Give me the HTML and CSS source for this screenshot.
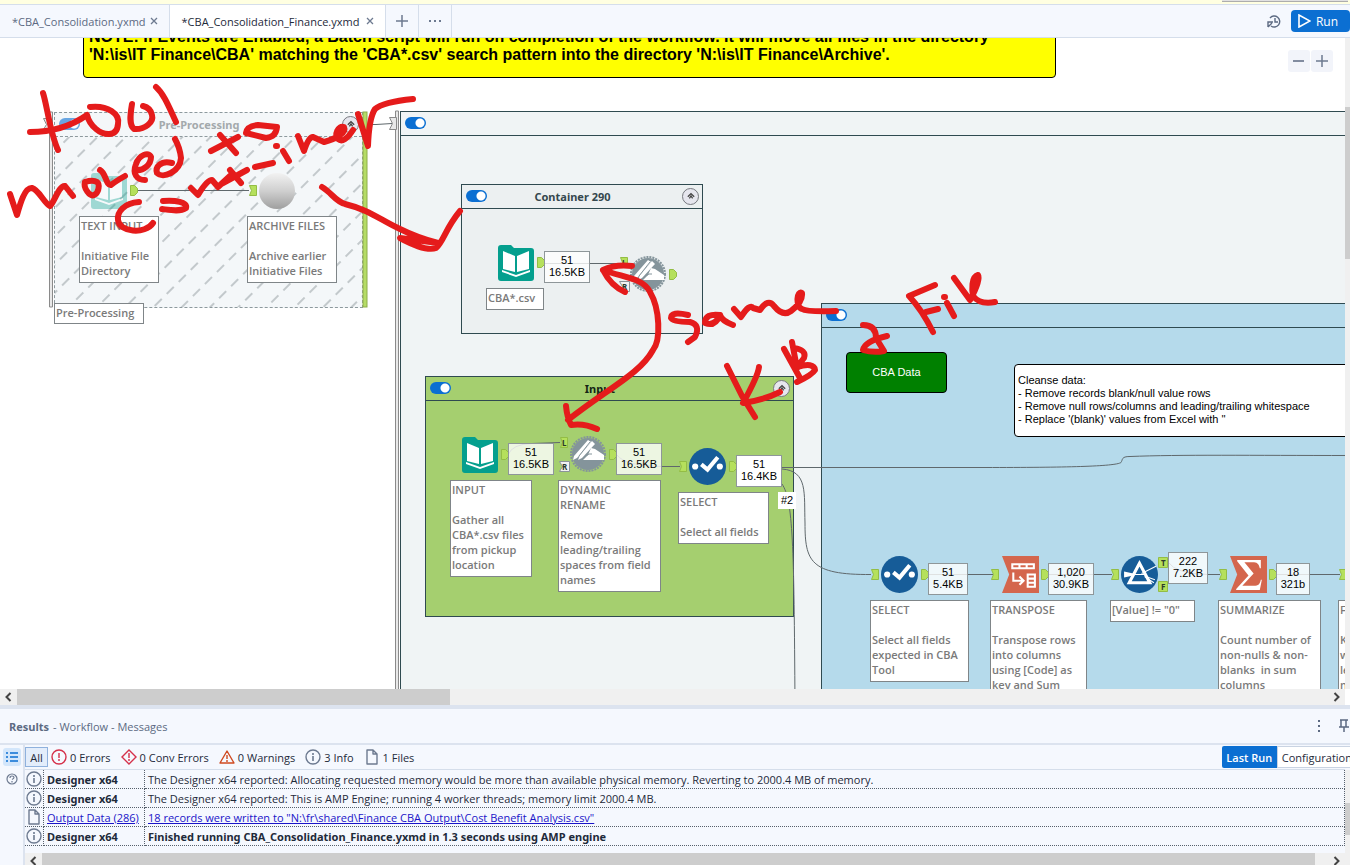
FILE: index.html
```html
<!DOCTYPE html>
<html lang="en">
<head>
  <meta charset="UTF-8">
  <meta name="viewport" content="width=device-width, initial-scale=1.0">
  <title>CBA_Consolidation_Finance.yxmd</title>
  <link rel="stylesheet" href="styles.css">
</head>
<body>
  <!-- Shared icons -->
  <svg class="defs" aria-hidden="true">
    <symbol id="i-book" viewBox="0 0 36 36">
      <path fill="#049f8e" d="M3 0h10l3 3h17a3 3 0 0 1 3 3v27a3 3 0 0 1-3 3H3a3 3 0 0 1-3-3V3a3 3 0 0 1 3-3z"/>
      <path fill="#fff" d="M5 6l12 5v16L5 24zM31 6l-12 5v16l12-3zM4 25l14 5 14-5v2l-14 5-14-5z"/>
    </symbol>
    <symbol id="i-rename" viewBox="0 0 36 36">
      <circle cx="18" cy="18" r="16" fill="#84949b"/>
      <circle cx="18" cy="18" r="17" fill="none" stroke="#84949b" stroke-width="2" stroke-dasharray="2 1"/>
      <path fill="#fff" d="M3 24l1-4L18 4l3 2L7 22z"/>
      <path fill="#fff" d="M8 24l2-5L22 5l3 3-13 14z"/>
      <path fill="#fff" d="M13 24l5-5 3-7 4 1 9 6v5z"/>
      <path d="M14 21l5-3h3M9 20L20 6" fill="none" stroke="#84949b" stroke-width="1"/>
    </symbol>
    <symbol id="i-select" viewBox="0 0 36 36">
      <circle cx="18" cy="18" r="18" fill="#165c98"/>
      <circle cx="6" cy="18" r="3" fill="#fff"/>
      <circle cx="30" cy="18" r="3" fill="#fff"/>
      <path d="M12 16l6 5L28 9" fill="none" stroke="#fff" stroke-width="4"/>
    </symbol>
    <symbol id="i-transpose" viewBox="0 0 36 36">
      <path fill="#d4664d" d="M0 0h36v36H0l7-18z"/>
      <path fill="#fff" d="M9 7h23v6H9zM24 17h9v14h-9z"/>
      <path d="M11 10h5m2 0h5m2 0h5M26 20h5m-5 4h5m-5 4h5" stroke="#d4664d" stroke-width="2"/>
      <path d="M11 16v8h9M17 20l4 4-4 4" fill="none" stroke="#fff" stroke-width="2"/>
    </symbol>
    <symbol id="i-filter" viewBox="0 0 36 36">
      <circle cx="18" cy="18" r="18" fill="#165c98"/>
      <path fill="#fff" d="M3 15l9 2v2l-9 2z"/>
      <path d="M20 17l14-7M24 20l9 3M23 20l9 6" stroke="#fff" stroke-width="1"/>
      <path d="M18 7L8 26h20z" fill="none" stroke="#fff" stroke-width="3"/>
      <path d="M12 18h12" stroke="#fff" stroke-width="1"/>
    </symbol>
    <symbol id="i-sum" viewBox="0 0 36 36">
      <path fill="#d4664d" d="M0 0h36v36H0l7-18z"/>
      <path fill="#fff" d="M7 4h23v8h-1c-1-5-3-6-7-6h-8l9 11-11 12h11c5 0 6-2 7-6h1l-2 10H6v-1l12-13L7 5z"/>
    </symbol>
    <symbol id="i-info" viewBox="0 0 16 16">
      <circle cx="8" cy="8" r="7" fill="none" stroke="#6d7a90" stroke-width="1.4"/>
      <path d="M8 4v2M8 7v5" stroke="#6d7a90" stroke-width="1.6"/>
    </symbol>
    <symbol id="i-file" viewBox="0 0 16 16">
      <path d="M3 1h6l4 4v10H3zM9 1v4h4" fill="none" stroke="#6d7a90" stroke-width="1.4" stroke-linejoin="round"/>
    </symbol>
    <symbol id="a-out" viewBox="0 0 8 11"><path fill="#b5e05c" stroke="#93bd45" d="M.5.5h4l3 3v4l-3 3h-4z"/></symbol>
    <symbol id="a-in" viewBox="0 0 8 11"><path fill="#b5e05c" stroke="#93bd45" d="M.5.5h7v10h-7l2-5z"/></symbol>
    <symbol id="i-up" viewBox="0 0 10 10"><path d="M1 6l4-4 4 4M3 8l2-3 2 3" fill="none" stroke="#444" stroke-width="1.6"/></symbol>
    <symbol id="i-left" viewBox="0 0 8 10"><path d="M6 1L2 5l4 4" fill="none" stroke="#444" stroke-width="2"/></symbol>
    <symbol id="i-right" viewBox="0 0 8 10"><path d="M2 1l4 4-4 4" fill="none" stroke="#444" stroke-width="2"/></symbol>
    <symbol id="i-x" viewBox="0 0 8 8"><path d="M1 1l6 6M7 1L1 7" stroke="#6d7a90" stroke-width="1.3"/></symbol>
    <symbol id="i-plus" viewBox="0 0 12 12"><path d="M6 0v12M0 6h12" stroke="#6d7a90" stroke-width="1.5"/></symbol>
  </svg>

  <div class="top-strip"><div class="top-field"></div></div>

  <header class="tabs">
    <div class="tab"><a href="#">*CBA_Consolidation.yxmd</a><button aria-label="Close"><svg class="x"><use href="#i-x"/></svg></button></div>
    <div class="tab active"><a href="#">*CBA_Consolidation_Finance.yxmd</a><button aria-label="Close"><svg class="x"><use href="#i-x"/></svg></button></div>
    <button class="tab-btn" aria-label="New tab"><svg class="plus"><use href="#i-plus"/></svg></button>
    <button class="tab-btn" aria-label="More"><svg width="12" height="2"><path d="M0 1h2m3 0h2m3 0h2" stroke="#6d7a90" stroke-width="2"/></svg></button>
    <div class="spacer"></div>
    <button class="history" aria-label="History">
      <svg width="14" height="14" viewBox="0 0 14 14"><path d="M3 4a5.500 5.500 0 1 1 1 8M1 13V8h5M1 13l4-4M8 4v4h3" fill="none" stroke="#5c6a82" stroke-width="1.4"/></svg>
    </button>
    <button class="run"><svg width="14" height="14" viewBox="0 0 14 14"><path d="M2 1v12l11-6z" fill="none" stroke="#fff" stroke-width="1.6"/></svg>Run</button>
  </header>

  <main class="canvas">
    <div class="stage">
      <div class="note yellow">NOTE: If Events are Enabled, a Batch script will run on completion of the workflow. It will move all files in the directory<br>'N:\is\IT Finance\CBA' matching the 'CBA*.csv' search pattern into the directory 'N:\is\IT Finance\Archive'.</div>

      <!-- Containers -->
      <section class="box pre">
        <svg class="hatch">
          <defs>
            <pattern id="dashes" width="17" height="20" patternUnits="userSpaceOnUse" patternTransform="rotate(-45)">
              <path d="M2 10h10" stroke="#c3c9cc" stroke-width="2"/>
            </pattern>
          </defs>
          <rect width="100%" height="100%" fill="url(#dashes)"/>
        </svg>
        <div class="box-head"><input type="checkbox" class="toggle" aria-label="Enable Pre-Processing" checked><h2>Pre-Processing</h2><button class="fold" aria-label="Collapse"><svg><use href="#i-up"/></svg></button></div>
      </section>
      <section class="box main-box">
        <div class="box-head"><input type="checkbox" class="toggle" aria-label="Enable container" checked></div>
      </section>
      <section class="box c290">
        <div class="box-head"><input type="checkbox" class="toggle" aria-label="Enable Container 290" checked><h2>Container 290</h2><button class="fold" aria-label="Collapse"><svg><use href="#i-up"/></svg></button></div>
      </section>
      <section class="box input-box">
        <div class="box-head"><input type="checkbox" class="toggle" aria-label="Enable Input" checked><h2>Input</h2><button class="fold" aria-label="Collapse"><svg><use href="#i-up"/></svg></button></div>
      </section>
      <section class="box blue-box">
        <div class="box-head"><input type="checkbox" class="toggle" aria-label="Enable CBA container" checked></div>
      </section>

      <div class="note green">CBA Data</div>
      <div class="note cleanse">Cleanse data:<br>- Remove records blank/null value rows<br>- Remove null rows/columns and leading/trailing whitespace<br>- Replace '(blank)' values from Excel with ''</div>

      <!-- Connections, anchors and tool icons -->
      <svg class="wires">
        <g fill="#e8e8e8" stroke="#8a8a8a">
          <path d="M49.500 112v195h3v-195zM395.500 111v600h3v-600z"/>
          <path d="M43.500 118.500h7v11h-7l3-5zM389.500 117.500h7v12h-7l3-6z"/>
        </g>
        <rect x="363" y="112" width="4" height="195" fill="#b5dc66" stroke="#8dae4a"/>
        <g fill="none" stroke="#5f686c" stroke-width="1">
          <path d="M368 124.500h8l16-1M137 190.500h112M544 263.500h78M508 455q4-11 24-11.500l28-1M617 455q8 11 45 11.500h18"/>
          <path d="M737 467.500h248c80 0 130-1 136-5c2-3 0-6 9-6c50-2 120-1 220-1"/>
          <path d="M782 469c26 2 22 24 23 54c0 38 5 52 66 51.500M782 484c11 16 12 60 13 220"/>
          <path d="M929 574.500h64M1048 574.500h64M1168 562q8 12 40 12.500h12M1276 574.500h64"/>
        </g>
        <g>
          <use href="#a-out" x="130" y="185" width="8" height="11"/>
          <use href="#a-in" x="248" y="185" width="10" height="11"/>
          <use href="#a-out" x="537" y="257" width="8" height="11"/>
          <use href="#a-in" x="620" y="257" width="8" height="11"/>
          <use href="#a-out" x="669" y="269" width="8" height="11"/>
          <use href="#a-out" x="501" y="449" width="8" height="11"/>
          <use href="#a-in" x="560" y="437" width="8" height="11"/>
          <use href="#a-out" x="609" y="449" width="8" height="11"/>
          <use href="#a-in" x="679" y="461" width="8" height="11"/>
          <use href="#a-out" x="729" y="461" width="8" height="11"/>
          <use href="#a-in" x="871" y="569" width="8" height="11"/>
          <use href="#a-out" x="921" y="569" width="8" height="11"/>
          <use href="#a-in" x="991" y="569" width="8" height="11"/>
          <use href="#a-out" x="1041" y="569" width="8" height="11"/>
          <use href="#a-in" x="1111" y="569" width="8" height="11"/>
          <use href="#a-in" x="1219" y="569" width="8" height="11"/>
          <use href="#a-out" x="1269" y="569" width="8" height="11"/>
          <use href="#a-in" x="1339" y="569" width="8" height="11"/>
        </g>
        <path d="M1158.500 557.500h9v10h-9zM1158.500 581.500h9v10h-9z" fill="#b5e05c" stroke="#93bd45"/>
        <path d="M619.500 281.500h10v10h-10l3-5zM559.500 461.500h10v10h-10l3-5z" fill="#f2f2f2" stroke="#8a9499"/>
        <g class="anchor-text">
          <text x="622" y="266">L</text><text x="622" y="290">R</text>
          <text x="562" y="446">L</text><text x="562" y="470">R</text>
          <text x="1161" y="566">T</text><text x="1161" y="590">F</text>
        </g>
        <use href="#i-book" x="91" y="173" width="36" height="36" opacity=".35"/>
        <defs>
          <linearGradient id="ball" x2="0" y2="1"><stop offset="0" stop-color="#f2f2f2"/><stop offset=".5" stop-color="#cfcfcf"/><stop offset="1" stop-color="#9f9f9f"/></linearGradient>
        </defs>
        <circle cx="277" cy="191" r="18" fill="url(#ball)"/>
        <use href="#i-book" x="498" y="245" width="36" height="36"/>
        <use href="#i-rename" x="630" y="256" width="36" height="36"/>
        <use href="#i-book" x="462" y="437" width="36" height="36"/>
        <use href="#i-rename" x="570" y="436" width="36" height="36"/>
        <use href="#i-select" x="689" y="448" width="37" height="37"/>
        <use href="#i-select" x="881" y="556" width="37" height="37"/>
        <use href="#i-transpose" x="1002" y="556" width="37" height="37"/>
        <use href="#i-filter" x="1121" y="556" width="37" height="37"/>
        <use href="#i-sum" x="1230" y="556" width="37" height="37"/>
      </svg>

      <!-- Record counts -->
      <div class="count n1">51<br>16.5KB</div>
      <div class="count n2">51<br>16.5KB</div>
      <div class="count n3">51<br>16.5KB</div>
      <div class="count n4">51<br>16.4KB</div>
      <div class="count n5">51<br>5.4KB</div>
      <div class="count n6">1,020<br>30.9KB</div>
      <div class="count n7">222<br>7.2KB</div>
      <div class="count n8">18<br>321b</div>
      <div class="wire-tag">#2</div>

      <!-- Annotations -->
      <p class="label l1">TEXT INPUT<br><br>Initiative File<br>Directory</p>
      <p class="label l2">ARCHIVE FILES<br><br>Archive earlier<br>Initiative Files</p>
      <p class="label l3">Pre-Processing</p>
      <p class="label l4">CBA*.csv</p>
      <p class="label l5">INPUT<br><br>Gather all<br>CBA*.csv files<br>from pickup<br>location</p>
      <p class="label l6">DYNAMIC<br>RENAME<br><br>Remove<br>leading/trailing<br>spaces from field<br>names</p>
      <p class="label l7">SELECT<br><br>Select all fields</p>
      <p class="label l8">SELECT<br><br>Select all fields<br>expected in CBA<br>Tool</p>
      <p class="label l9">TRANSPOSE<br><br>Transpose rows<br>into columns<br>using [Code] as<br>key and Sum</p>
      <p class="label l10">[Value] != "0"</p>
      <p class="label l11">SUMMARIZE<br><br>Count number of<br>non-nulls &amp; non-<br>blanks&nbsp; in sum<br>columns</p>
      <p class="label l12">F<br><br>K<br>w<br>le<br>n</p>

      <!-- Pen markup -->
      <svg class="ink">
        <path d="M43 93C47 105 50 133 58 150M30 132C52 132 70 127 87 115M90 107C108 105 120 114 118 124C117 138 103 135 96 129C91 125 88 119 87 115"/>
        <path d="M132 104C130 116 129 125 134 129C145 130 154 122 152 115C151 110 147 107 143 106M156 87C164 94 169 107 176 122"/>
        <path d="M10 194L17 215C20 204 25 187 32 188C39 190 44 203 50 206C54 203 59 185 65 186L73 196"/>
        <path d="M85 182C83 188 90 197 94 195C99 193 100 184 97 182C94 180 88 181 85 182M100 170C106 173 106 186 111 185Q116 181 125 176"/>
        <path d="M136 170C143 171 151 165 151 157C149 151 139 155 136 164C132 174 137 180 145 180M172 163C161 160 155 167 157 173C163 179 180 172 181 158Q180 148 175 139"/>
        <path d="M220 135L236 153M211 151L238 137M246 133Q247 126 258 125L277 127Q276 137 266 138L246 133"/>
        <path d="M139 202C124 203 117 212 118 220C119 232 145 235 153 223M163 201C175 200 188 202 186 208C180 212 170 210 162 209"/>
        <path d="M191 188L198 195Q207 180 212 180L218 187L231 175M230 170L241 183M223 183L247 170M255 167L273 163M276 146h1M283 151L289 161"/>
        <path d="M298 136L304 151Q309 136 313 137L324 142C335 139 347 133 344 127C338 125 334 135 338 139Q344 144 353 130M358 114L368 146Q369 118 375 109Q383 102 413 99"/>
        <path d="M322 187C332 193 335 201 345 204C370 210 380 220 400 229Q418 238 438 243L400 238Q426 252 436 248C444 241 445 229 460 211"/>
        <path d="M632 266Q615 264 603 270Q611 286 625 292M603 270C625 278 643 278 650 292C660 309 661 340 653 350C640 374 607 389 568 420M566 406Q567 417 571 425Q584 423 597 429"/>
        <path d="M688 315Q671 311 671 318Q673 322 690 322Q701 325 695 337L688 342M720 315Q705 313 705 323Q715 327 720 315Q722 321 733 325"/>
        <path d="M734 309L741 317Q750 303 753 308L760 310Q768 298 774 306Q783 317 791 311Q803 302 802 293C797 290 795 306 802 309Q807 312 836 311"/>
        <path d="M935 285L909 296Q922 310 933 332M926 312L938 309M944 297h1M947 303L954 316M954 278L970 300Q981 280 978 275C971 277 972 290 973 296Q980 305 995 302"/>
        <path d="M863 325Q876 325 876 338L884 351Q873 353 863 350Q865 341 887 336M727 366L742 396L755 417M759 367Q758 376 743 403Q764 400 780 392"/>
        <path d="M784 349L800 378M792 342L797 368M794 348Q807 350 804 358L797 367Q814 362 815 370Q812 375 797 382"/>
      </svg>
    </div>
    <div class="zoomer"><button aria-label="Zoom out"><svg class="plus"><path d="M0 6h11" stroke="#5c6a82" stroke-width="1.5"/></svg></button><button aria-label="Zoom in"><svg class="plus"><use href="#i-plus"/></svg></button></div>
    <div class="vscroll"><div class="vthumb"></div></div>
  </main>
  <div class="hscroll canvas-scroll"><svg><use href="#i-left"/></svg><div class="track"><div class="thumb"></div></div><svg><use href="#i-right"/></svg></div>

  <section class="results">
    <div class="results-head"><b>Results</b> <span>- Workflow - Messages</span><div class="spacer"></div>
      <svg width="4" height="12"><path d="M2 0v2m0 3v2m0 3v2" stroke="#5c6a82" stroke-width="2"/></svg>
      <svg class="pin" width="12" height="14" viewBox="0 0 12 14"><path d="M2 1h8M3 1v7M8 1v7M1 8h10M6 8v5" fill="none" stroke="#5c6a82" stroke-width="1.5"/></svg>
    </div>
    <div class="results-body">
      <nav class="side">
        <button class="on" aria-label="Messages"><svg width="12" height="10"><path d="M0 1h2M4 1h8M0 5h2M4 5h8M0 9h2M4 9h8" stroke="#0b6fd2" stroke-width="1.4"/></svg></button>
        <button aria-label="Help"><svg width="12" height="12" viewBox="0 0 12 12"><circle cx="6" cy="6" r="5" fill="none" stroke="#6d7a90" stroke-width="1.2"/><path d="M4 5q0-2 2-2t2 1.500q0 1-2 2M6 8v1.500" fill="none" stroke="#6d7a90" stroke-width="1.2"/></svg></button>
      </nav>
      <div class="pane">
        <div class="filters">
          <button class="all">All</button>
          <button><svg class="ic" viewBox="0 0 16 16"><g fill="none" stroke="#d5304a" stroke-width="1.4"><circle cx="8" cy="8" r="7"/><path d="M8 4v5M8 10v2"/></g></svg>0 Errors</button>
          <button><svg class="ic" viewBox="0 0 16 16"><g fill="none" stroke="#d5304a" stroke-width="1.4"><path d="M8 1l7 7-7 7-7-7zM8 4v5M8 10v2"/></g></svg>0 Conv Errors</button>
          <button><svg class="ic" viewBox="0 0 16 16"><g fill="none" stroke="#cf4a20" stroke-width="1.4" stroke-linejoin="round"><path d="M8 2l7 12H1zM8 6v4M8 11v2"/></g></svg>0 Warnings</button>
          <button><svg class="ic"><use href="#i-info"/></svg>3 Info</button>
          <button><svg class="ic"><use href="#i-file"/></svg>1 Files</button>
          <div class="spacer"></div>
          <button class="last-run">Last Run</button><button class="config">Configuration</button>
        </div>
        <table>
          <tr><td><svg class="ic"><use href="#i-info"/></svg></td><th scope="row">Designer x64</th><td>The Designer x64 reported: Allocating requested memory would be more than available physical memory. Reverting to 2000.4 MB of memory.</td></tr>
          <tr><td><svg class="ic"><use href="#i-info"/></svg></td><th scope="row">Designer x64</th><td>The Designer x64 reported: This is AMP Engine; running 4 worker threads; memory limit 2000.4 MB.</td></tr>
          <tr><td><svg class="ic"><use href="#i-file"/></svg></td><td><a href="#">Output Data (286)</a></td><td><a href="#">18 records were written to "N:\fr\shared\Finance CBA Output\Cost Benefit Analysis.csv"</a></td></tr>
          <tr><td><svg class="ic"><use href="#i-info"/></svg></td><th scope="row">Designer x64</th><td><b>Finished running CBA_Consolidation_Finance.yxmd in 1.3 seconds using AMP engine</b></td></tr>
        </table>
        <div class="hscroll"><svg><use href="#i-left"/></svg><div class="track"><div class="thumb wide"></div></div><svg><use href="#i-right"/></svg></div>
      </div>
      <div class="pane-scroll"><div class="pane-thumb"></div></div>
    </div>
  </section>
</body>
</html>
```
FILE: styles.css
```css
* {
  box-sizing: border-box;
}

body {
  margin: 0;
  height: 100vh;
  display: flex;
  flex-direction: column;
  overflow: hidden;
  background: #fff;
  color: #1e2a3a;
  font-family: "Open Sans", "Noto Sans", sans-serif;
  font-size: 11px;
}

button {
  border: 0;
  padding: 0;
  background: none;
  color: inherit;
  font: inherit;
  display: flex;
  align-items: center;
  justify-content: center;
  cursor: pointer;
}

.defs {
  position: absolute;
  width: 0;
  height: 0;
}

.spacer {
  flex: 1;
}

/* top bar */
.top-strip {
  height: 4px;
  flex: none;
  display: flex;
  justify-content: flex-end;
  background: #ffffe1;
}

.top-field {
  width: 126px;
  height: 2px;
  margin-right: 2px;
  background: #e1e1e1;
  border-bottom: 1px solid #adadad;
}

.tabs {
  height: 34px;
  flex: none;
  display: flex;
  align-items: stretch;
  background: #f5f8fe;
  border-top: 1px solid #d5deeb;
  border-bottom: 1px solid #d5deeb;
}

.tab {
  display: flex;
  align-items: center;
  gap: 4px;
  padding: 0 11px 0 12px;
  border-right: 1px solid #d5deeb;
}

.tab a {
  color: #5c6a82;
  text-decoration: none;
}

.tab.active {
  background: #fff;
  gap: 7px;
}

.tab.active a {
  color: #1e2a3a;
}

.x {
  width: 8px;
  height: 8px;
}

.tab-btn {
  width: 33px;
  border-right: 1px solid #d5deeb;
}

.plus {
  width: 12px;
  height: 12px;
}

.history {
  margin-right: 10px;
}

.run {
  align-self: center;
  width: 59px;
  height: 22px;
  gap: 5px;
  padding-right: 6px;
  border-radius: 4px;
  background: #0b6fd2;
  color: #fff;
  font-size: 12px;
}

/* canvas */
.canvas {
  flex: 1;
  min-height: 0;
  position: relative;
  overflow: hidden;
}

.stage {
  position: absolute;
  top: -38px;
  left: 0;
  right: 5px;
  height: 740px;
  overflow: hidden;
}

.note {
  position: absolute;
  border: 1px solid #000;
  border-radius: 4px;
  font-family: "Liberation Sans", Arial, sans-serif;
  white-space: nowrap;
  color: #000;
}

.yellow {
  left: 83px;
  top: 10px;
  width: 973px;
  height: 68px;
  padding: 17px 5px;
  background: #ff0;
  font-size: 16px;
  line-height: 18px;
  font-weight: bold;
}

.green {
  left: 846px;
  top: 352px;
  width: 101px;
  height: 41px;
  background: #008000;
  color: #fff;
  font-size: 11px;
  line-height: 39px;
  text-align: center;
}

.cleanse {
  left: 1014px;
  top: 364px;
  width: 400px;
  height: 73px;
  padding: 9px 3px;
  background: #fff;
  font-size: 11px;
  line-height: 13px;
}

.box {
  position: absolute;
  border: 1px solid #2f4a50;
}

.box-head {
  height: 24px;
  display: grid;
  grid-template-columns: 26px 1fr 26px;
  align-items: center;
  padding: 0 3px 1px 4px;
  border-bottom: 1px solid #2f4a50;
}

.box h2 {
  margin: 0 20px 0 0;
  font-family: "Noto Sans", sans-serif;
  font-size: 11px;
  line-height: 15px;
  text-align: center;
  color: #34474d;
}

.toggle {
  appearance: none;
  width: 21px;
  height: 12px;
  margin: 0;
  border-radius: 6px;
  background: radial-gradient(circle at 15px 6px, #fff 4px, #0b6fd2 5px);
}

.fold {
  justify-self: end;
  width: 17px;
  height: 17px;
  border: 1px solid #77797f;
  border-radius: 50%;
  background: #e6e6ee;
}

.fold svg {
  width: 8px;
  height: 8px;
}

.pre {
  left: 54px;
  top: 112px;
  width: 309px;
  height: 196px;
  background: #f4f7f9;
  border: 1px dashed #8d999d;
}

.pre .box-head {
  border-bottom: 1px dashed #8d999d;
}

.pre h2 {
  color: #a3a9ac;
}

.pre .toggle {
  opacity: .6;
}

.hatch {
  position: absolute;
  top: 24px;
  left: 0;
  width: 100%;
  height: 170px;
}

.main-box {
  left: 400px;
  top: 111px;
  right: -10px;
  bottom: -10px;
  background: #f0f4f5;
}

.c290 {
  left: 461px;
  top: 184px;
  width: 242px;
  height: 150px;
  background: #ecf0f1;
}

.input-box {
  left: 425px;
  top: 376px;
  width: 369px;
  height: 241px;
  background: #a5cf6f;
}

.input-box h2 {
  color: #142414;
}

.blue-box {
  left: 821px;
  top: 303px;
  right: -10px;
  bottom: -10px;
  background: #b5daeb;
}

.wires,
.ink {
  position: absolute;
  top: 0;
  left: 0;
  width: 100%;
  height: 100%;
  pointer-events: none;
}

.ink {
  fill: none;
  stroke: #e51b1b;
  stroke-width: 6;
  stroke-linecap: round;
  stroke-linejoin: round;
}

.anchor-text {
  font-size: 8px;
  font-weight: bold;
  fill: #2c3a2c;
}

.count {
  position: absolute;
  width: 46px;
  height: 32px;
  padding-top: 2px;
  border: 1px solid #8e9699;
  background: rgba(255, 255, 255, .8);
  color: #000;
  font-family: "Liberation Sans", Arial, sans-serif;
  font-size: 11px;
  line-height: 12px;
  text-align: center;
}

.n1 { left: 544px; top: 251px; }
.n2 { left: 508px; top: 443px; }
.n3 { left: 616px; top: 443px; }
.n4 { left: 736px; top: 455px; background: #fff; }
.n5 { left: 928px; top: 563px; width: 40px; }
.n6 { left: 1048px; top: 563px; }
.n7 { left: 1168px; top: 552px; width: 40px; }
.n8 { left: 1276px; top: 563px; width: 34px; }

.wire-tag {
  position: absolute;
  left: 778px;
  top: 492px;
  width: 18px;
  background: #fff;
  color: #000;
  font-family: "Liberation Sans", Arial, sans-serif;
  font-size: 11px;
  line-height: 17px;
  text-align: center;
}

.label {
  position: absolute;
  margin: 0;
  padding: 1px;
  border: 1px solid #7f8588;
  background: #fff;
  color: #7a7a7a;
  font-size: 11px;
  font-weight: 600;
  line-height: 15px;
  white-space: nowrap;
}

.l1 { left: 79px; top: 216px; width: 80px; height: 67px; }
.l2 { left: 247px; top: 216px; width: 90px; height: 67px; }
.l3 { left: 54px; top: 303px; width: 90px; height: 21px; }
.l4 { left: 486px; top: 288px; width: 58px; height: 22px; }
.l5 { left: 450px; top: 480px; width: 82px; height: 97px; }
.l6 { left: 558px; top: 480px; width: 103px; height: 112px; }
.l7 { left: 678px; top: 492px; width: 91px; height: 52px; }
.l8 { left: 870px; top: 600px; width: 99px; height: 82px; }
.l9 { left: 990px; top: 600px; width: 97px; height: 110px; }
.l10 { left: 1110px; top: 600px; width: 85px; height: 22px; }
.l11 { left: 1218px; top: 600px; width: 103px; height: 110px; }
.l12 { left: 1338px; top: 600px; width: 90px; height: 110px; }

.zoomer {
  position: absolute;
  top: 12px;
  right: 17px;
  display: flex;
  gap: 1px;
}

.zoomer button {
  width: 22px;
  height: 22px;
  border-radius: 3px;
  background: #f2f4fa;
}

.vscroll {
  position: absolute;
  top: 0;
  right: 0;
  bottom: 0;
  width: 5px;
  background: #f0f0f0;
}

.vthumb {
  height: 152px;
  margin-top: 69px;
  background: #cdcdcd;
}

.hscroll {
  height: 16px;
  flex: none;
  display: flex;
  align-items: center;
  background: #f0f0f0;
}

.hscroll svg {
  width: 17px;
  height: 10px;
}

.canvas-scroll {
  margin: 0 5px 0 0;
}

.track {
  flex: 1;
  height: 100%;
}

.thumb {
  width: 33%;
  height: 100%;
  background: #cdcdcd;
}

.thumb.wide {
  width: 99%;
}

/* results */
.results {
  flex: none;
  height: 160px;
  overflow: hidden;
  background: #f5f8fe;
  border-top: 4px solid #dce3ef;
}

.results-head {
  height: 36px;
  display: flex;
  align-items: center;
  gap: 4px;
  padding-left: 9px;
  border-bottom: 2px solid #dce3ef;
  color: #5c6a82;
}

.pin {
  margin: 0 0 0 13px;
}

.results-body {
  display: flex;
}

.side {
  width: 25px;
  height: 124px;
  flex: none;
  display: flex;
  flex-direction: column;
  align-items: center;
  gap: 4px;
  padding-top: 3px;
  border-right: 2px solid #dce3ef;
}

.side button {
  width: 18px;
  height: 18px;
  border-radius: 3px;
}

.side .on {
  background: #d3e6fb;
}

.pane {
  flex: 1;
  min-width: 0;
}

.filters {
  height: 25px;
  display: flex;
  align-items: center;
  gap: 10px;
  border-bottom: 1px solid #d5deeb;
  white-space: nowrap;
}

.filters button {
  gap: 3px;
}

.filters .all {
  width: 23px;
  height: 20px;
  margin-right: -7px;
  border: 1px solid #8fb1dd;
  background: #e3edfb;
}

.filters .last-run {
  width: 55px;
  height: 22px;
  margin-right: -10px;
  border-radius: 2px 0 0 2px;
  background: #0b6fd2;
  color: #fff;
  font-weight: 600;
}

.filters .config {
  height: 22px;
  margin-right: -12px;
  padding: 0 4px;
  background: #fff;
  border: 1px solid #c9d3e2;
}

.ic {
  display: block;
  width: 16px;
  height: 16px;
}

table {
  width: 100%;
  border-spacing: 0;
  line-height: 15px;
  white-space: nowrap;
}

td,
th {
  height: 19px;
  padding: 0 3px;
  border-right: 1px dotted #56606c;
  border-bottom: 1px dotted #56606c;
  text-align: left;
}

th,
td b {
  font-family: "Noto Sans", sans-serif;
}

td:first-child {
  width: 19px;
  padding: 0 1px;
}

td:nth-child(2),
th {
  width: 101px;
}

td a {
  color: #1a14c8;
}

.pane .hscroll {
  margin-top: 7px;
}

.pane-scroll {
  width: 5px;
  margin-top: 25px;
  background: #f0f0f0;
}

.pane-thumb {
  height: 32px;
  margin-top: 33px;
  background: #cdcdcd;
}
```
